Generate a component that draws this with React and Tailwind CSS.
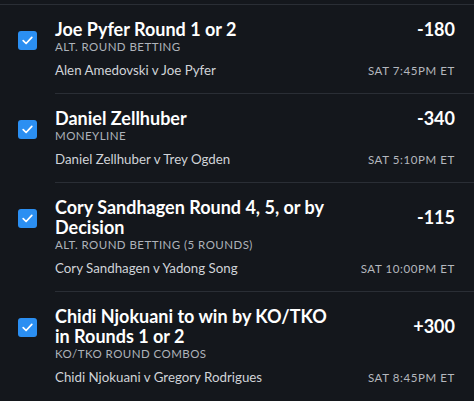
import React from "react";

const bets = [
  {
    title: "Joe Pyfer Round 1 or 2",
    market: "ALT. ROUND BETTING",
    matchup: "Alen Amedovski v Joe Pyfer",
    odds: "-180",
    time: "SAT 7:45PM ET",
  },
  {
    title: "Daniel Zellhuber",
    market: "MONEYLINE",
    matchup: "Daniel Zellhuber v Trey Ogden",
    odds: "-340",
    time: "SAT 5:10PM ET",
  },
  {
    title: "Cory Sandhagen Round 4, 5, or by Decision",
    market: "ALT. ROUND BETTING (5 ROUNDS)",
    matchup: "Cory Sandhagen v Yadong Song",
    odds: "-115",
    time: "SAT 10:00PM ET",
  },
  {
    title: "Chidi Njokuani to win by KO/TKO in Rounds 1 or 2",
    market: "KO/TKO ROUND COMBOS",
    matchup: "Chidi Njokuani v Gregory Rodrigues",
    odds: "+300",
    time: "SAT 8:45PM ET",
  },
];

function Check() {
  return (
    <div className="w-[19px] h-[19px] rounded-[3px] bg-[#2b8ff2] flex items-center justify-center shrink-0">
      <svg width="11" height="9" viewBox="0 0 11 9" fill="none">
        <path d="M1.2 4.6l2.9 2.9 5.7-6.2" stroke="white" strokeWidth="1.7" strokeLinecap="round" strokeLinejoin="round" />
      </svg>
    </div>
  );
}

export default function App() {
  return (
    <div className="w-[474px] h-[401px] overflow-hidden bg-[#14171c] pt-[4px]" style={{ fontFamily: "Lato, 'Liberation Sans', sans-serif" }}>
      <div className="border-t border-[#2a2e35]">
        {bets.map((b, i) => (
          <div key={i} className="flex pl-[18px]">
            <div className="pt-[26px]">
              <Check />
            </div>
            <div className={`flex-1 ml-[18px] pt-[14px] pb-[13px] pr-[19px] ${i < bets.length - 1 ? "border-b border-[#2a2e35]" : ""}`}>
              <div className="flex items-center justify-between">
                <div className="w-[275px] text-[18px] leading-[20px] font-bold text-white">{b.title}</div>
                <div className="text-[18px] leading-[20px] font-bold text-white">{b.odds}</div>
              </div>
              <div className="text-[11.5px] leading-[16px] tracking-[0.45px] text-[#aeb3ba]">{b.market}</div>
              <div className="flex items-baseline justify-between mt-[6px]">
                <div className="text-[13.3px] leading-[18px] text-[#d0d3d8]">{b.matchup}</div>
                <div className="text-[11.5px] leading-[18px] tracking-[0.6px] text-[#b4b8be]">{b.time}</div>
              </div>
            </div>
          </div>
        ))}
      </div>
    </div>
  );
}
